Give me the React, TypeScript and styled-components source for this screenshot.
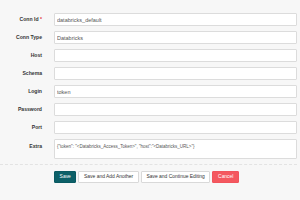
import React from "react";
import styled, { createGlobalStyle } from "styled-components";

const Global = createGlobalStyle`
  html, body {
    margin: 0;
    padding: 0;
    background: #f7f7f7;
    font-family: "Liberation Sans", Arial, Helvetica, sans-serif;
  }
`;

const Page = styled.div`
  padding: 13px 3px 0 0;
  width: 300px;
  height: 200px;
  box-sizing: border-box;
  overflow: hidden;
`;

const Form = styled.form`
  display: grid;
  grid-template-columns: 54px 1fr;
  row-gap: 5px;
  margin: 0;
`;

const Label = styled.label<{ $top?: boolean }>`
  font-size: 5.1px;
  font-weight: bold;
  color: #333;
  text-align: right;
  padding-right: 12px;
  white-space: nowrap;
  line-height: ${(p) => (p.$top ? "6px" : "13px")};
  padding-top: ${(p) => (p.$top ? "4px" : "0")};
  align-self: start;
`;

const Required = styled.span`
  color: #e2323a;
  margin-left: 1.5px;
`;

const Input = styled.input`
  box-sizing: border-box;
  height: 13px;
  width: 100%;
  border: 1px solid #dcdcdc;
  border-radius: 1px;
  background: #fff;
  color: #555;
  font-family: inherit;
  font-size: 5.5px;
  padding: 0 2px;
  margin: 0;
  outline: none;
`;

const TextArea = styled.textarea`
  box-sizing: border-box;
  height: 20px;
  width: 100%;
  border: 1px solid #dcdcdc;
  border-radius: 1px;
  background: #fff;
  color: #555;
  font-family: inherit;
  font-size: 4.5px;
  line-height: 6px;
  padding: 4px 2px;
  margin: 0;
  resize: none;
  outline: none;
  overflow: hidden;
`;

const Actions = styled.div`
  margin-top: 5px;
  border-top: 1px dashed #e3e3e3;
  padding: 6px 0 0 54px;
  display: flex;
  gap: 2px;
`;

const Button = styled.button<{ $variant?: "primary" | "danger" }>`
  height: 12px;
  box-sizing: border-box;
  padding: 0 4.6px;
  font-family: inherit;
  font-size: 4.95px;
  line-height: 10px;
  border-radius: 1px;
  white-space: nowrap;
  cursor: pointer;
  border: 1px solid
    ${(p) =>
      p.$variant === "primary" ? "#0a5a62" : p.$variant === "danger" ? "#f1545c" : "#d9d9d9"};
  background: ${(p) =>
    p.$variant === "primary" ? "#0d6068" : p.$variant === "danger" ? "#f4585f" : "#fff"};
  color: ${(p) => (p.$variant ? "#fff" : "#333")};
`;

const fields: { label: string; value: string; required?: boolean }[] = [
  { label: "Conn Id", value: "databricks_default", required: true },
  { label: "Conn Type", value: "Databricks" },
  { label: "Host", value: "" },
  { label: "Schema", value: "" },
  { label: "Login", value: "token" },
  { label: "Password", value: "" },
  { label: "Port", value: "" },
];

export default function App() {
  return (
    <>
      <Global />
      <Page>
        <Form onSubmit={(e) => e.preventDefault()}>
          {fields.map((f) => (
            <React.Fragment key={f.label}>
              <Label>
                {f.label}
                {f.required && <Required>*</Required>}
              </Label>
              <Input readOnly value={f.value} />
            </React.Fragment>
          ))}
          <Label $top>Extra</Label>
          <TextArea
            readOnly
            value={'{"token": "<Databricks_Access_Token>", "host":"<Databricks_URL>"}'}
          />
        </Form>
        <Actions>
          <Button $variant="primary">Save</Button>
          <Button>Save and Add Another</Button>
          <Button>Save and Continue Editing</Button>
          <Button $variant="danger">Cancel</Button>
        </Actions>
      </Page>
    </>
  );
}
